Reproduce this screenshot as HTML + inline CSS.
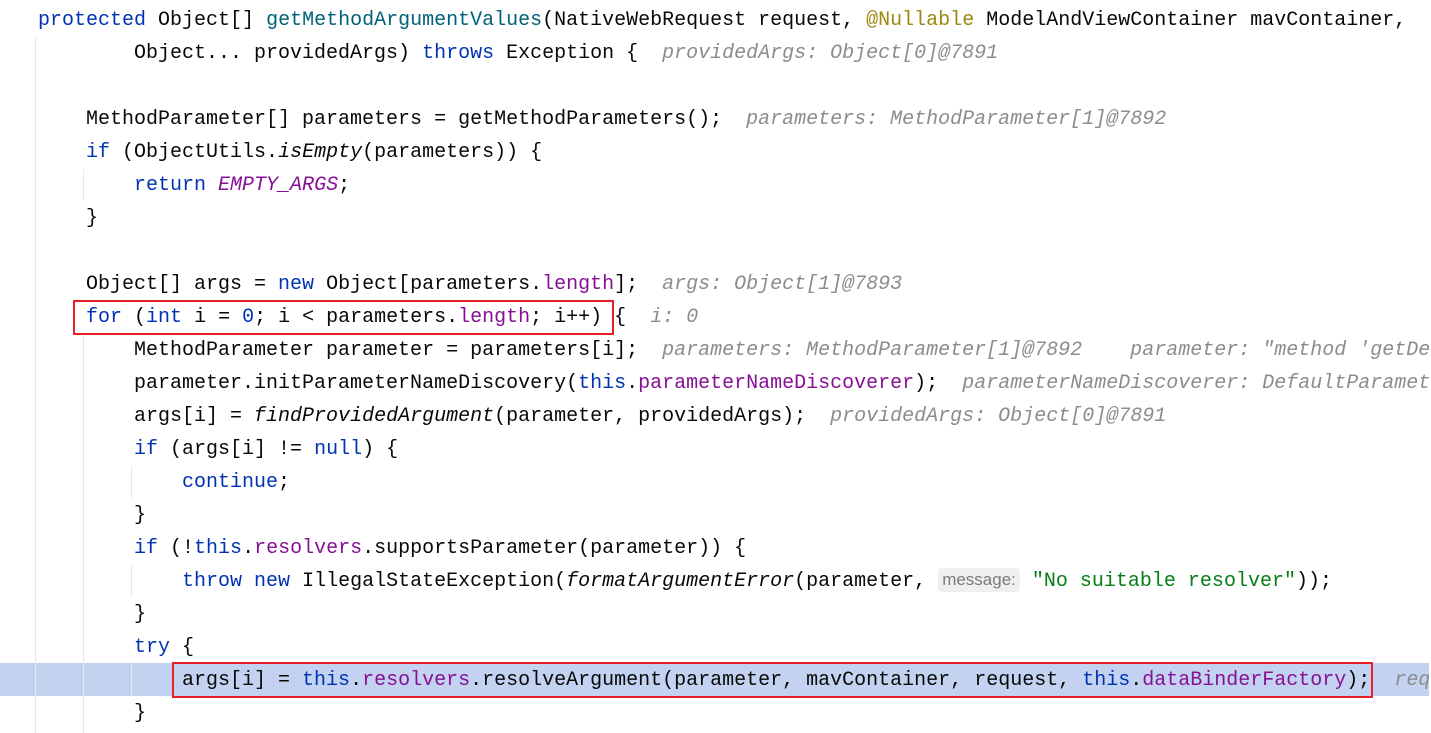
<!DOCTYPE html>
<html><head><meta charset="utf-8"><style>
body{margin:0;width:1431px;height:733px;background:#fff;overflow:hidden;position:relative;font-family:"Liberation Mono",monospace;font-size:20px;color:#080808}
.l{position:absolute;left:38px;height:33px;line-height:33px;white-space:pre}
.k{color:#0033b3}.m{color:#00627a}.f{color:#871094}.s{color:#067d17}.a{color:#9e880d}
.i{font-style:italic}
.h{color:#8c8c8c;font-style:italic}
.g{position:absolute;width:1px;background:#e8e8e8}
.hl{position:absolute;left:0;top:663px;width:1429px;height:33px;background:#c3d2f0}
.box{position:absolute;border:2px solid #e8202a}
.msg{display:inline-block;font-family:"Liberation Sans",sans-serif;font-size:17px;color:#7a7a7a;background:#efefef;border-radius:4px;padding:0 4px;line-height:24px;font-style:normal;vertical-align:1px}
</style></head><body>
<div class="hl"></div>
<div class="g" style="left:35px;top:37px;height:696px"></div>
<div class="g" style="left:83px;top:169px;height:32px"></div>
<div class="g" style="left:83px;top:334px;height:399px"></div>
<div class="g" style="left:131px;top:466px;height:32px"></div>
<div class="g" style="left:131px;top:565px;height:32px"></div>
<div class="g" style="left:131px;top:664px;height:32px"></div>
<div class="l" style="top:4px"><span class="k">protected</span> Object[] <span class="m">getMethodArgumentValues</span>(NativeWebRequest request, <span class="a">@Nullable</span> ModelAndViewContainer mavContainer,</div>
<div class="l" style="top:37px">        Object... providedArgs) <span class="k">throws</span> Exception {  <span class="h">providedArgs: Object[0]@7891</span></div>
<div class="l" style="top:103px">    MethodParameter[] parameters = getMethodParameters();  <span class="h">parameters: MethodParameter[1]@7892</span></div>
<div class="l" style="top:136px">    <span class="k">if</span> (ObjectUtils.<span class="i">isEmpty</span>(parameters)) {</div>
<div class="l" style="top:169px">        <span class="k">return</span> <span class="f i">EMPTY_ARGS</span>;</div>
<div class="l" style="top:202px">    }</div>
<div class="l" style="top:268px">    Object[] args = <span class="k">new</span> Object[parameters.<span class="f">length</span>];  <span class="h">args: Object[1]@7893</span></div>
<div class="l" style="top:301px">    <span class="k">for</span> (<span class="k">int</span> i = <span class="k">0</span>; i &lt; parameters.<span class="f">length</span>; i++) {  <span class="h">i: 0</span></div>
<div class="l" style="top:334px">        MethodParameter parameter = parameters[i];  <span class="h">parameters: MethodParameter[1]@7892    parameter: "method 'getDe</span></div>
<div class="l" style="top:367px">        parameter.initParameterNameDiscovery(<span class="k">this</span>.<span class="f">parameterNameDiscoverer</span>);  <span class="h">parameterNameDiscoverer: DefaultParamet</span></div>
<div class="l" style="top:400px">        args[i] = <span class="i">findProvidedArgument</span>(parameter, providedArgs);  <span class="h">providedArgs: Object[0]@7891</span></div>
<div class="l" style="top:433px">        <span class="k">if</span> (args[i] != <span class="k">null</span>) {</div>
<div class="l" style="top:466px">            <span class="k">continue</span>;</div>
<div class="l" style="top:499px">        }</div>
<div class="l" style="top:532px">        <span class="k">if</span> (!<span class="k">this</span>.<span class="f">resolvers</span>.supportsParameter(parameter)) {</div>
<div class="l" style="top:565px">            <span class="k">throw new</span> IllegalStateException(<span class="i">formatArgumentError</span>(parameter, <span class="msg">message:</span> <span class="s">"No suitable resolver"</span>));</div>
<div class="l" style="top:598px">        }</div>
<div class="l" style="top:631px">        <span class="k">try</span> {</div>
<div class="l" style="top:664px">            args[i] = <span class="k">this</span>.<span class="f">resolvers</span>.resolveArgument(parameter, mavContainer, request, <span class="k">this</span>.<span class="f">dataBinderFactory</span>);  <span class="h">req</span></div>
<div class="l" style="top:697px">        }</div>
<div style="position:absolute;left:1429px;top:663px;width:2px;height:33px;background:#fff"></div>
<div class="box" style="left:73px;top:300px;width:537px;height:31px"></div>
<div class="box" style="left:172px;top:662px;width:1197px;height:32px"></div>
</body></html>
